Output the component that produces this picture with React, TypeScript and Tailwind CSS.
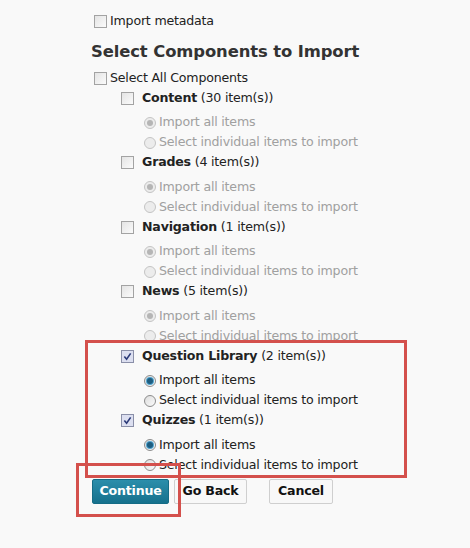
import React from 'react';

const FONT = { fontFamily: '"DejaVu Sans", Verdana, sans-serif' };

function Box({ checked = false }: { checked?: boolean }) {
  return (
    <span
      className={`inline-flex h-[13px] w-[13px] shrink-0 items-center justify-center border ${
        checked ? 'border-[#8a8fa8] bg-[#dcdff0]' : 'border-[#a3a3a3] bg-gradient-to-br from-[#e4e4e4] to-[#fbfbfb]'
      }`}
    >
      {checked && (
        <svg viewBox="0 0 10 10" className="h-[9px] w-[9px]">
          <path d="M1.5 5 L4 8 L8.5 1.5" fill="none" stroke="#2b3a78" strokeWidth="1.8" />
        </svg>
      )}
    </span>
  );
}

function Radio({ on = false, disabled = false }: { on?: boolean; disabled?: boolean }) {
  return (
    <span
      className={`inline-flex h-[12px] w-[12px] shrink-0 items-center justify-center rounded-full border ${
        disabled ? 'border-[#c4c4c4] bg-[#ececec]' : 'border-[#8c8c8c] bg-gradient-to-br from-[#dedede] to-[#fafafa]'
      }`}
    >
      {on && (
        <span
          className={`h-[6px] w-[6px] rounded-full ${
            disabled ? 'bg-[#b5b5b5]' : 'bg-[#1d5d80] ring-1 ring-[#4fa3cf]'
          }`}
        />
      )}
    </span>
  );
}

type Group = { name: string; count: string; checked: boolean };

const groups: Group[] = [
  { name: 'Content', count: '(30 item(s))', checked: false },
  { name: 'Grades', count: '(4 item(s))', checked: false },
  { name: 'Navigation', count: '(1 item(s))', checked: false },
  { name: 'News', count: '(5 item(s))', checked: false },
  { name: 'Question Library', count: '(2 item(s))', checked: true },
  { name: 'Quizzes', count: '(1 item(s))', checked: true },
];

export default function App() {
  return (
    <div
      className="relative h-[548px] w-[470px] bg-[#f9f9f9] text-[12.6px] tracking-[-0.2px] text-[#222]"
      style={FONT}
    >
      <div className="flex flex-col pl-[91px] pt-[11px]">
        <label className="flex h-[20px] items-center gap-[3px] pl-[3px]">
          <Box />
          <span>Import metadata</span>
        </label>

        <h2 className="mt-[9px] flex h-[24px] items-center text-[16.4px] font-bold tracking-[-0.1px] text-[#333]">
          Select Components to Import
        </h2>

        <label className="mt-[4px] flex h-[20px] items-center gap-[3px] pl-[3px]">
          <Box />
          <span>Select All Components</span>
        </label>

        {groups.map((g) => (
          <div key={g.name} className="flex flex-col">
            <label className="flex h-[20px] items-center gap-[8px] pl-[30px]">
              <Box checked={g.checked} />
              <span>
                <b className="font-bold">{g.name}</b> {g.count}
              </span>
            </label>
            <label
              className={`mt-[4px] flex h-[21px] items-center gap-[3px] pl-[53px] ${
                g.checked ? 'text-[#222]' : 'text-[#a0a0a0]'
              }`}
            >
              <Radio on disabled={!g.checked} />
              <span>Import all items</span>
            </label>
            <label
              className={`flex h-[19.5px] items-center gap-[3px] pl-[53px] ${
                g.checked ? 'text-[#222]' : 'text-[#a0a0a0]'
              }`}
            >
              <Radio disabled={!g.checked} />
              <span>Select individual items to import</span>
            </label>
          </div>
        ))}

        <div className="mt-[4px] flex items-center pl-[1px]">
          <button className="h-[25px] w-[77px] rounded-[2px] border border-[#156c86] bg-gradient-to-b from-[#2b8eab] to-[#16718d] font-bold text-white">
            Continue
          </button>
          <button className="ml-[5px] h-[25px] w-[73px] rounded-[2px] border border-[#cfcfcf] bg-[#f8f8f8] font-bold text-[#111]">
            Go Back
          </button>
          <button className="ml-[22px] h-[25px] w-[64px] rounded-[2px] border border-[#cfcfcf] bg-[#f8f8f8] font-bold text-[#111]">
            Cancel
          </button>
        </div>
      </div>

      {/* annotation boxes */}
      <div className="absolute left-[85px] top-[340px] h-[138px] w-[322px] border-[3px] border-[#d4504c]" />
      <div className="absolute left-[76px] top-[463px] h-[54px] w-[105px] border-[3px] border-[#d4504c]" />
    </div>
  );
}
